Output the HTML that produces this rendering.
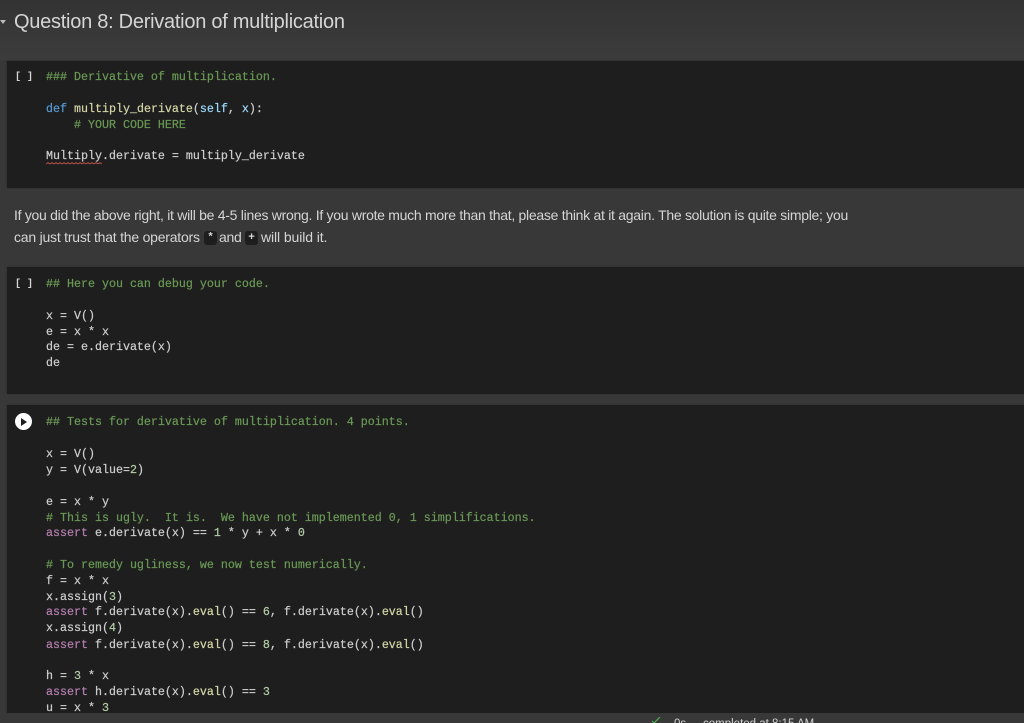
<!DOCTYPE html>
<html><head><meta charset="utf-8">
<style>
html,body{margin:0;padding:0;width:1024px;height:723px;overflow:hidden;background:#383838}
#p{position:relative;width:1024px;height:723px;overflow:hidden;background:#383838}
.cell{position:absolute;left:7px;width:1017px;background:#1e1e1e;box-shadow:0 0 2px rgba(0,0,0,.25)}
.c{position:absolute;left:46px;margin-top:1px;font:11.67px/16px "Liberation Mono",monospace;color:#cfcfcf;white-space:pre;-webkit-text-stroke:.2px}
.b{position:absolute;left:15px;margin-top:1px;font:10px/16px "Liberation Mono",monospace;color:#d4d4d4;white-space:pre;font-weight:bold}
.g{color:#6a9955}.k{color:#569cd6}.f{color:#d6d6a8}.v{color:#9cdcfe}.n{color:#b5cea8}.p{color:#b57fb0}
.t{position:absolute;left:14px;font-family:"Liberation Sans",sans-serif;color:#d5d5d5;white-space:pre}
.m{position:absolute;background:#1e1e1e;border-radius:3px;font:bold 11px/14px "Liberation Mono",monospace;width:13px;height:14px;text-align:center;color:#d4d4d4}
</style></head><body><div id="p">
<div style="position:absolute;left:0;top:0;width:1024px;height:60px;background:linear-gradient(#333,#3c3c3c)"></div>
<div style="position:absolute;left:0;top:20px;width:0;height:0;border-left:3px solid transparent;border-right:3px solid transparent;border-top:4px solid #bbb"></div>
<div class="t" id="h" style="top:10px;font-size:20px;line-height:24px;letter-spacing:-.265px">Question 8: Derivation of multiplication</div>

<div class="cell" style="top:61px;height:127px"></div>
<div class="cell" style="top:267px;height:127px"></div>
<div class="cell" style="top:405px;height:308px"></div>

<div class="t" style="top:206px;font-size:14px;line-height:18px;letter-spacing:-.282px">If you did the above right, it will be 4-5 lines wrong. If you wrote much more than that, please think at it again. The solution is quite simple; you</div>
<div class="t" style="top:228px;font-size:14px;line-height:18px;letter-spacing:-.22px">can just trust that the operators</div>
<div class="m" style="left:204px;top:231px">*</div>
<div class="t" style="left:219px;top:228px;font-size:14px;line-height:18px;letter-spacing:-.282px">and</div>
<div class="m" style="left:245px;top:231px">+</div>
<div class="t" style="left:261px;top:228px;font-size:14px;line-height:18px;letter-spacing:-.1px">will build it.</div>

<div class="b" style="top:69px">[ ]</div>
<div class="c g" style="top:68px">### Derivative of multiplication.</div>
<div class="c" style="top:100px"><span class="k">def</span> <span class="f">multiply_derivate</span>(<span class="v">self</span>, <span class="v">x</span>):</div>
<div class="c g" style="top:116px">    # YOUR CODE HERE</div>
<div class="c" style="top:147px">Multiply.derivate = multiply_derivate</div>
<svg style="position:absolute;left:46px;top:162px" width="56" height="4"><path d="M0 2 l2 -1.500 l2 1.500 l2 -1.500 l2 1.500 l2 -1.500 l2 1.500 l2 -1.500 l2 1.500 l2 -1.500 l2 1.500 l2 -1.500 l2 1.500 l2 -1.500 l2 1.500 l2 -1.500 l2 1.500 l2 -1.500 l2 1.500 l2 -1.500 l2 1.500 l2 -1.500 l2 1.500 l2 -1.500 l2 1.500 l2 -1.500 l2 1.500 l2 -1.500 l2 1.500" fill="none" stroke="#c0564b" stroke-width=".8"/></svg>

<div class="b" style="top:276px">[ ]</div>
<div class="c g" style="top:275px">## Here you can debug your code.</div>
<div class="c" style="top:307px">x = V()</div>
<div class="c" style="top:323px">e = x * x</div>
<div class="c" style="top:338px">de = e.derivate(x)</div>
<div class="c" style="top:354px">de</div>

<div style="position:absolute;left:15px;top:413px;width:17px;height:17px;border-radius:50%;background:#fff"></div>
<div style="position:absolute;left:21px;top:417.500px;width:0;height:0;border-left:6px solid #1e1e1e;border-top:4px solid transparent;border-bottom:4px solid transparent"></div>
<div class="c g" style="top:413px">## Tests for derivative of multiplication. 4 points.</div>
<div class="c" style="top:445px">x = V()</div>
<div class="c" style="top:461px">y = V(value=<span class="n">2</span>)</div>
<div class="c" style="top:493px">e = x * y</div>
<div class="c g" style="top:509px"># This is ugly.  It is.  We have not implemented 0, 1 simplifications.</div>
<div class="c" style="top:524px"><span class="p">assert</span> e.derivate(x) == <span class="n">1</span> * y + x * <span class="n">0</span></div>
<div class="c g" style="top:556px"># To remedy ugliness, we now test numerically.</div>
<div class="c" style="top:572px">f = x * x</div>
<div class="c" style="top:588px">x.assign(<span class="n">3</span>)</div>
<div class="c" style="top:603px"><span class="p">assert</span> f.derivate(x).<span class="f">eval</span>() == <span class="n">6</span>, f.derivate(x).<span class="f">eval</span>()</div>
<div class="c" style="top:619px">x.assign(<span class="n">4</span>)</div>
<div class="c" style="top:636px"><span class="p">assert</span> f.derivate(x).<span class="f">eval</span>() == <span class="n">8</span>, f.derivate(x).<span class="f">eval</span>()</div>
<div class="c" style="top:667px">h = <span class="n">3</span> * x</div>
<div class="c" style="top:683px"><span class="p">assert</span> h.derivate(x).<span class="f">eval</span>() == <span class="n">3</span></div>
<div class="c" style="top:699px">u = x * <span class="n">3</span></div>

<div style="position:absolute;left:0;top:713px;width:1024px;height:10px;background:#383838;overflow:hidden">
<svg style="position:absolute;left:652px;top:4px" width="12" height="6"><path d="M0 4 L2 6 L8 0" fill="none" stroke="#4caf50" stroke-width="1.200"/></svg>
<span style="position:absolute;left:674px;top:4px;font:11.500px/14px 'Liberation Sans',sans-serif;color:#d0d0d0">0s</span>
<span style="position:absolute;left:703px;top:4px;font:11.500px/14px 'Liberation Sans',sans-serif;color:#d0d0d0">completed at 8:15 AM</span>
</div>
</div></body></html>
